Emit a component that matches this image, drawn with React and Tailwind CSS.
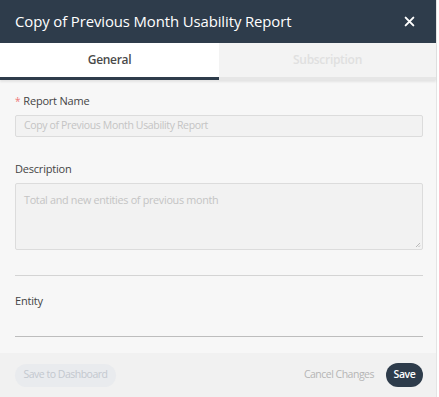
import React from "react";

function ReportModal() {
  return (
    <div
      className="w-[437px] h-[397px] flex flex-col bg-[#f7f7f7] border-r border-[#e4e4e4]"
      style={{ fontFamily: '"Open Sans", sans-serif' }}
    >
      <div className="h-[43px] bg-[#2e3c4b] flex items-center justify-between pl-[15px] pr-[21px] shrink-0">
        <h2 className="text-[14.9px] text-white tracking-[-0.1px]">
          Copy of Previous Month Usability Report
        </h2>
        <button className="text-white">
          <svg width="11" height="11" viewBox="0 0 10 10">
            <path d="M1.5 1.5L8.5 8.5M8.5 1.5L1.5 8.5" stroke="white" strokeWidth="1.8" strokeLinecap="round" />
          </svg>
        </button>
      </div>

      <div className="flex h-[37px] shrink-0 shadow-[0_2px_2px_rgba(0,0,0,0.08)]">
        <div className="w-[219px] bg-white border-b-[3px] border-[#2e3c4b] flex items-center justify-center">
          <span className="text-[12px] font-semibold text-[#4a4a4a] tracking-[-0.3px]">General</span>
        </div>
        <div className="flex-1 bg-[#f3f3f3] border-b-[3px] border-[#e6e6e6] flex items-center justify-center">
          <span className="text-[12px] font-semibold text-[#e0e0e0] tracking-[-0.3px]">Subscription</span>
        </div>
      </div>

      <div className="flex-1 pl-[15px] pr-[13px] pt-[13px]">
        <label className="flex items-center text-[11px] text-[#444] h-[16px] tracking-[-0.2px]">
          <span className="text-[#e77] mr-[3px] text-[10px]">*</span>Report Name
        </label>
        <div className="mt-[6px] h-[22px] border border-[#dcdcdc] rounded-[2px] bg-[#f2f2f2] flex items-center px-[8px]">
          <span className="text-[10.5px] text-[#c4c4c4] tracking-[-0.35px]">Copy of Previous Month Usability Report</span>
        </div>

        <label className="block mt-[24px] text-[11px] text-[#444] h-[16px] tracking-[-0.2px]">Description</label>
        <div className="relative mt-[6px] h-[67px] border border-[#dcdcdc] rounded-[2px] bg-[#f2f2f2] px-[8px] pt-[2px]">
          <span className="text-[10.8px] text-[#c4c4c4] tracking-[-0.3px]">Total and new entities of previous month</span>
          <svg className="absolute right-[1px] bottom-[1px]" width="6" height="6" viewBox="0 0 6 6">
            <path d="M5 1L1 5M5 3.5L3.5 5" stroke="#aaa" strokeWidth="0.8" />
          </svg>
        </div>

        <div className="mt-[25px] border-t border-[#d4d4d4]" />

        <label className="block mt-[17px] text-[11px] text-[#444] h-[16px] tracking-[-0.2px]">Entity</label>
        <div className="mt-[27px] border-t border-[#bdbdbd]" />
      </div>

      <div className="h-[44px] shrink-0 bg-[#f1f1f1] flex items-center justify-between pl-[15px] pr-[13px]">
        <button className="h-[23px] w-[101px] rounded-full bg-[#e9ebee] text-[10.5px] text-[#c3c8ce] tracking-[-0.5px]">
          Save to Dashboard
        </button>
        <div className="flex items-center gap-[12px]">
          <button className="text-[10.5px] text-[#b5b5b5] tracking-[-0.5px]">Cancel Changes</button>
          <button className="h-[24px] w-[37px] rounded-full bg-[#2e3c4b] text-[10.5px] font-semibold text-white tracking-[-0.4px]">
            Save
          </button>
        </div>
      </div>
    </div>
  );
}

export default function App() {
  return (
    <div className="w-[439px] h-[397px] bg-white">
      <ReportModal />
    </div>
  );
}
